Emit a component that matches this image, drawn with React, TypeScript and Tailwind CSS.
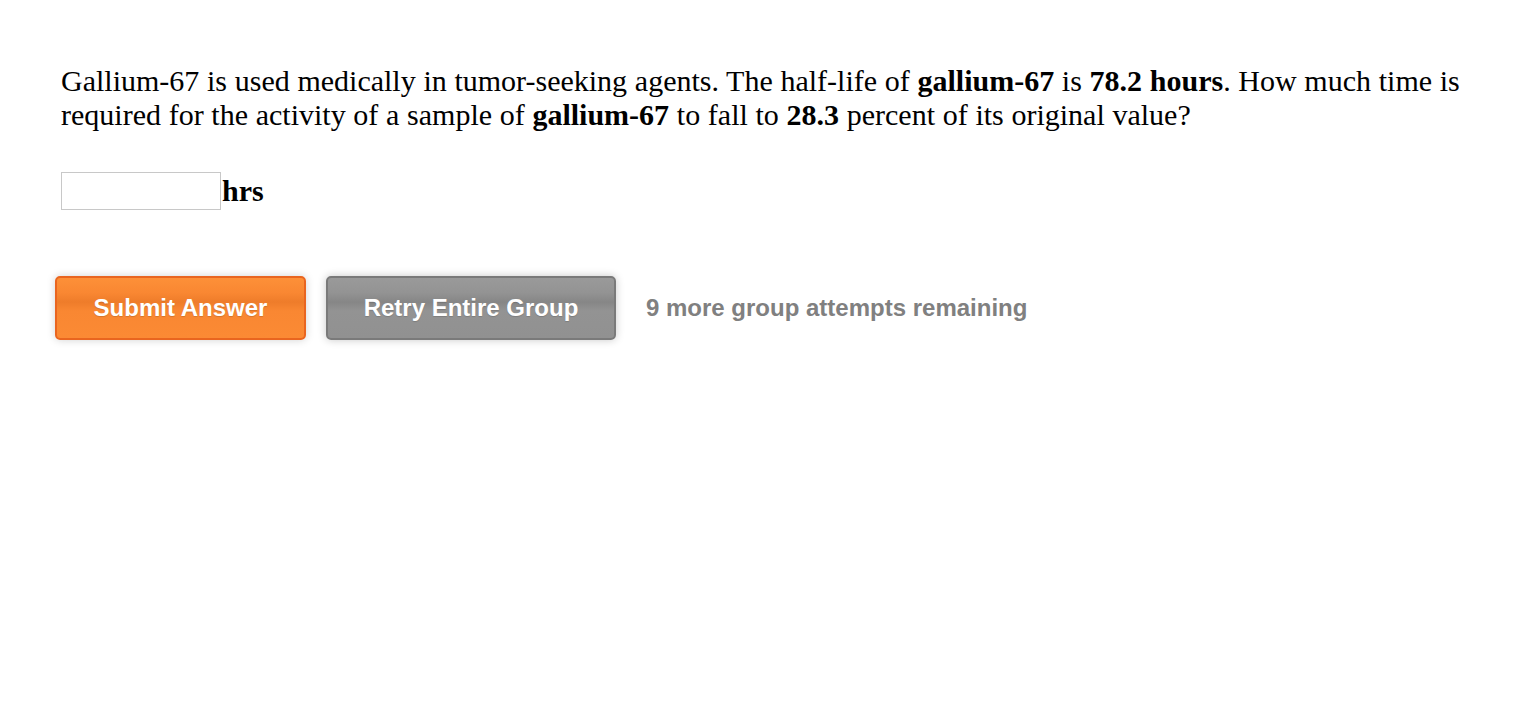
export default function App() {
  return (
    <div className="min-h-[716px] w-full bg-white pl-[61px] pr-[50px] pt-[64px]">
      {/* question text */}
      <p className="text-[30px] leading-[34px] text-black [word-spacing:0.2px] font-['Liberation_Serif',serif]">
        Gallium-67 is used medically in tumor-seeking agents. The half-life of <b>gallium-67</b> is <b>78.2 hours</b>. How much time is required for the activity of a sample of <b>gallium-67</b> to fall to <b>28.3</b> percent of its original value?
      </p>

      <div className="mt-[40px] flex items-center">
        <input
          type="text"
          className="h-[38px] w-[160px] border border-[#c8c8c8] bg-white outline-none"
        />
        <span className="ml-[1px] text-[30px] font-bold leading-[34px] text-black font-['Liberation_Serif',serif]">
          hrs
        </span>
      </div>

      <div className="mt-[66px] -ml-[6px] flex items-center font-['Liberation_Sans',Arial,sans-serif]">
        <button className="flex h-[64px] w-[251px] items-center justify-center rounded-[5px] border-2 border-[#e9651f] bg-[linear-gradient(to_bottom,#fd9038_0%,#f98732_25%,#ee7c2a_40%,#f98732_55%,#fb8a34_100%)] text-[24px] font-bold text-white shadow-[0_0_8px_rgba(0,0,0,0.18)] [text-shadow:0_1px_1px_rgba(0,0,0,0.15)]">
          Submit Answer
        </button>
        <button className="ml-[20px] flex h-[64px] w-[290px] items-center justify-center rounded-[5px] border-2 border-[#7a7a7a] bg-[linear-gradient(to_bottom,#9a9a9a_0%,#939393_25%,#868686_40%,#939393_55%,#919191_100%)] text-[24px] font-bold text-white shadow-[0_0_8px_rgba(0,0,0,0.22)] [text-shadow:0_1px_1px_rgba(0,0,0,0.15)]">
          Retry Entire Group
        </button>
        <span className="ml-[30px] text-[24px] font-bold text-[#808080]">
          9 more group attempts remaining
        </span>
      </div>
    </div>
  );
}
